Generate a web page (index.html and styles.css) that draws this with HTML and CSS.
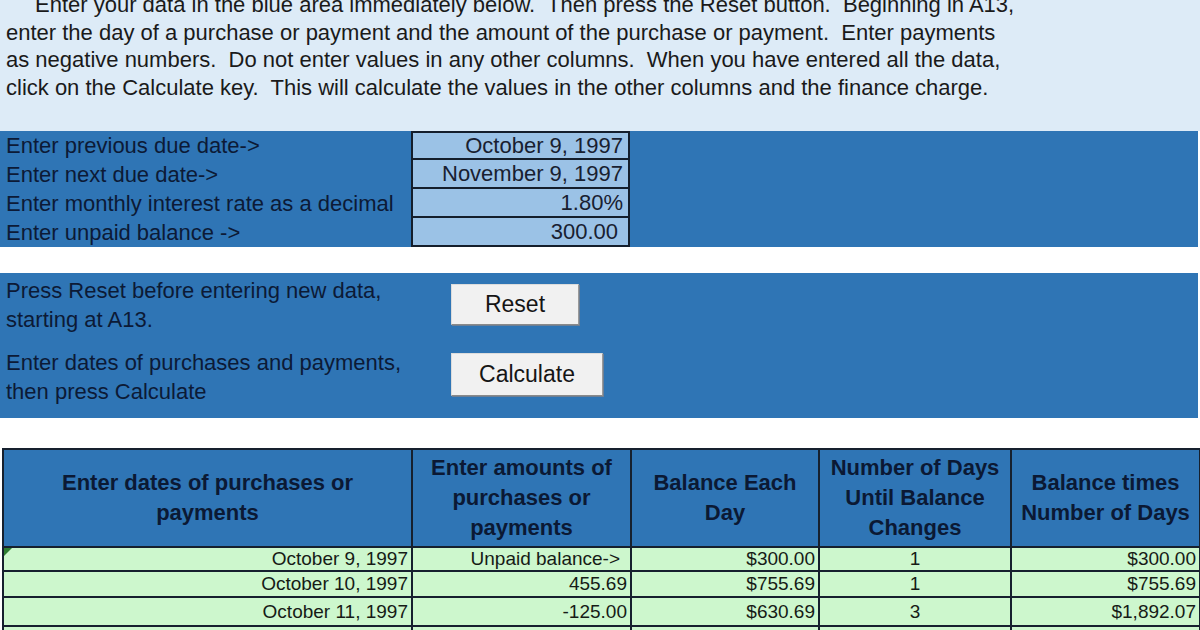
FILE: index.html
```html
<!DOCTYPE html>
<html>
<head>
<meta charset="utf-8">
<link rel="stylesheet" href="styles.css">
</head>
<body>
<div class="page">
  <section class="intro">
    <p class="intro-text"><span class="first">Enter your data in the blue area immediately below.&nbsp; Then press the Reset button.&nbsp; Beginning in A13,</span><br>enter the day of a purchase or payment and the amount of the purchase or payment.&nbsp; Enter payments<br>as negative numbers.&nbsp; Do not enter values in any other columns.&nbsp; When you have entered all the data,<br>click on the Calculate key.&nbsp; This will calculate the values in the other columns and the finance charge.</p>
  </section>

  <section class="band inputs">
    <span class="lbl">Enter previous due date-&gt;</span><span class="val first-val">October 9, 1997</span>
    <span class="lbl">Enter next due date-&gt;</span><span class="val">November 9, 1997</span>
    <span class="lbl">Enter monthly interest rate as a decimal</span><span class="val">1.80%</span>
    <span class="lbl">Enter unpaid balance -&gt;</span><span class="val num">300.00</span>
  </section>

  <div class="gap gap-a"></div>

  <section class="band actions">
    <div class="arow arow-1">
      <p class="alabel">Press Reset before entering new data,<br>starting at A13.</p>
      <button class="btn btn-reset">Reset</button>
    </div>
    <div class="arow arow-2">
      <p class="alabel">Enter dates of purchases and payments,<br>then press Calculate</p>
      <button class="btn btn-calc">Calculate</button>
    </div>
  </section>

  <div class="gap gap-b"></div>

  <table class="grid">
    <colgroup>
      <col class="c1"><col class="c2"><col class="c3"><col class="c4"><col class="c5">
    </colgroup>
    <thead>
      <tr>
        <th>Enter dates of purchases or<br>payments</th>
        <th>Enter amounts of<br>purchases or<br>payments</th>
        <th>Balance Each<br>Day</th>
        <th>Number of Days<br>Until Balance<br>Changes</th>
        <th>Balance times<br>Number of Days</th>
      </tr>
    </thead>
    <tbody>
      <tr class="r1">
        <td class="flag">October 9, 1997</td>
        <td class="pad-r">Unpaid balance-&gt;</td>
        <td>$300.00</td>
        <td class="ctr">1</td>
        <td>$300.00</td>
      </tr>
      <tr class="r2">
        <td>October 10, 1997</td>
        <td>455.69</td>
        <td>$755.69</td>
        <td class="ctr">1</td>
        <td>$755.69</td>
      </tr>
      <tr class="r3">
        <td>October 11, 1997</td>
        <td>-125.00</td>
        <td>$630.69</td>
        <td class="ctr">3</td>
        <td>$1,892.07</td>
      </tr>
      <tr class="r4">
        <td></td><td></td><td></td><td></td><td></td>
      </tr>
    </tbody>
  </table>
</div>
</body>
</html>
```

FILE: styles.css
```css
html, body {
  margin: 0;
  padding: 0;
  overflow: hidden;
  background: #ffffff;
}

.page {
  width: 1200px;
  font-family: "Liberation Sans", Arial, sans-serif;
  color: #10203a;
}

.intro {
  height: 131px;
  background: #ddebf7;
  padding-left: 6px;
  overflow: hidden;
  box-sizing: border-box;
}

.intro-text {
  margin: -9px 0 0 0;
  font-size: 22px;
  line-height: 27.5px;
  color: #1a1a1a;
  white-space: nowrap;
}

.intro-text .first {
  padding-left: 29px;
}

.band {
  background: #2f75b5;
  width: 1198px;
}

.inputs {
  display: grid;
  grid-template-columns: 405px 219px;
  grid-auto-rows: 29px;
  padding-left: 6px;
  box-sizing: border-box;
}

.lbl {
  font-size: 22px;
  line-height: 29px;
  color: #0c1a36;
  white-space: nowrap;
}

.val {
  background: #9bc2e6;
  border: 2px solid #141e2c;
  border-top: none;
  box-sizing: border-box;
  text-align: right;
  padding-right: 5px;
  font-size: 22px;
  line-height: 27px;
  color: #182030;
  white-space: nowrap;
}

.val.first-val {
  border-top: 2px solid #141e2c;
  line-height: 25px;
}

.val.num {
  padding-right: 10px;
}

.gap-a {
  height: 26px;
}

.gap-b {
  height: 30px;
}

.actions {
  height: 145px;
  padding: 3px 0 0 6px;
  box-sizing: border-box;
}

.arow {
  display: flex;
  align-items: flex-start;
}

.arow-1 {
  height: 72px;
}

.alabel {
  margin: 0;
  width: 445px;
  font-size: 22px;
  line-height: 29px;
  color: #0c1a36;
  white-space: nowrap;
}

.btn {
  font-family: "Liberation Sans", Arial, sans-serif;
  font-size: 23px;
  color: #151515;
  background: #f1f1f1;
  border: 1px solid #dcdcdc;
  border-right-color: #9a9a9a;
  border-bottom-color: #8a8a8a;
  box-shadow: 1px 1px 0 #6d7f94;
  padding: 0;
  margin: 0;
}

.btn-reset {
  width: 128px;
  height: 41px;
  margin-top: 8px;
}

.btn-calc {
  width: 152px;
  height: 43px;
  margin-top: 5px;
}

.grid {
  border-collapse: collapse;
  table-layout: fixed;
  width: 1197px;
  margin-left: 2px;
}

.c1 { width: 409px; }
.c2 { width: 219px; }
.c3 { width: 188px; }
.c4 { width: 192px; }
.c5 { width: 189px; }

.grid th {
  background: #2f75b5;
  border: 2px solid #16202e;
  height: 96px;
  padding: 0;
  font-size: 22px;
  font-weight: bold;
  line-height: 30px;
  color: #0b1934;
  text-align: center;
  vertical-align: middle;
  white-space: nowrap;
}

.grid td {
  background: #cdf7cd;
  border: 2px solid #16202e;
  padding: 0 3px 0 0;
  font-size: 19px;
  color: #161b16;
  text-align: right;
  white-space: nowrap;
  vertical-align: middle;
}

.grid td.ctr {
  text-align: center;
  padding: 0;
}

.grid td.pad-r {
  padding-right: 10px;
}

.grid td.flag {
  position: relative;
}

.grid td.flag::before {
  content: "";
  position: absolute;
  left: 0;
  top: 0;
  border-top: 8px solid #2e7d32;
  border-right: 8px solid transparent;
}

.r1 td { height: 22px; }
.r2 td { height: 24px; }
.r3 td { height: 27px; }
.r4 td { height: 25px; }
```
